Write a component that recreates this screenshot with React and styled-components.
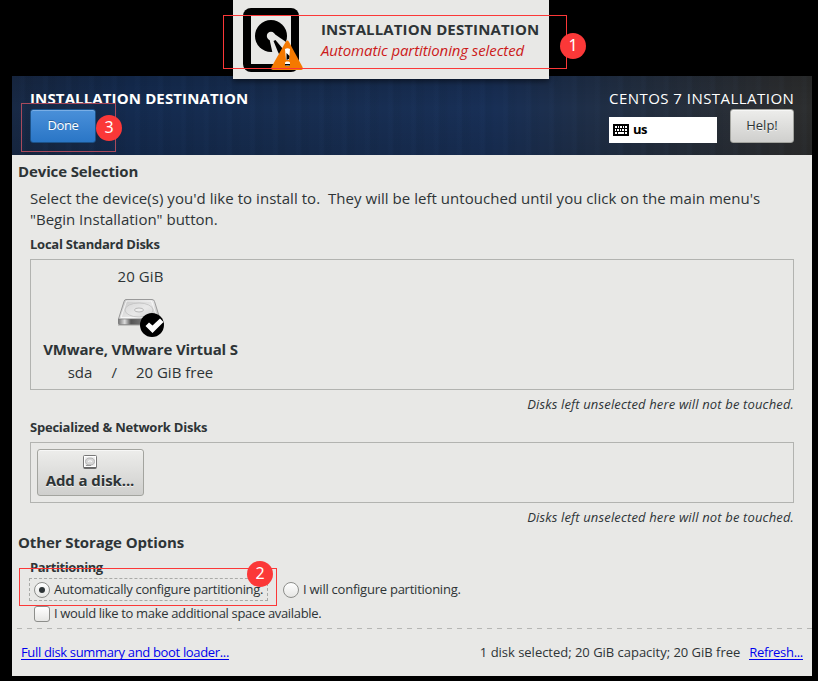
import styled, { createGlobalStyle, css } from "styled-components";

const GlobalStyle = createGlobalStyle`
  * {
    box-sizing: border-box;
  }

  body {
    margin: 0;
    background: #000;
    color: #2e3436;
    font-family: "Open Sans", "Noto Sans", sans-serif;
    font-size: 13px;
  }
`;

const Screen = styled.div`
  position: relative;
  width: 818px;
  height: 681px;
  overflow: hidden;
  background: #000;
`;

const SpokeCard = styled.div`
  position: relative;
  z-index: 1;
  display: flex;
  width: 316px;
  height: 79px;
  margin: 0 0 -3px 233px;
  padding: 8px 0 0 10px;
  background: #e8e8e6;
  box-shadow: 0 2px 6px rgba(0, 0, 0, 0.55);
`;

const SpokeText = styled.div`
  padding: 11px 0 0 17px;
`;

const Line = styled.div`
  height: ${(p) => p.$h || 21}px;
  line-height: ${(p) => p.$h || 21}px;
  font-size: ${(p) => p.$size || 15}px;
  font-weight: ${(p) => (p.$bold ? 700 : 400)};
  font-style: ${(p) => (p.$italic ? "italic" : "normal")};
  letter-spacing: ${(p) => p.$track || 0}px;
  color: ${(p) => p.$color || "inherit"};
  white-space: pre;
`;

const Window = styled.main`
  width: 800px;
  height: 600px;
  margin-left: 12px;
  background: #e8e8e6;
`;

const Header = styled.header`
  display: flex;
  justify-content: space-between;
  height: 79px;
  padding: 12px 18px 0;
  color: #fff;
  background:
    repeating-linear-gradient(
      90deg,
      rgba(255, 255, 255, 0) 0 7px,
      rgba(90, 140, 210, 0.02) 9px 12px,
      rgba(0, 0, 0, 0.03) 14px 19px,
      rgba(255, 255, 255, 0) 23px
    ),
    linear-gradient(rgba(0, 0, 0, 0.12), rgba(0, 0, 0, 0) 40%, rgba(0, 0, 0, 0.1)),
    linear-gradient(90deg, #182945 0%, #142b50 15%, #172d50 34%, #182f56 60%, #222f43 77%, #2c2e31 96%, #2c2d2d 100%);
`;

const HeaderRight = styled.div`
  width: 185px;
`;

const HeaderTools = styled.div`
  display: flex;
  justify-content: space-between;
`;

const Keyboard = styled.div`
  display: flex;
  align-items: center;
  gap: 4px;
  width: 108px;
  height: 26px;
  margin-top: 8px;
  padding: 0 0 1px 4px;
  background: #fff;
  color: #000;
`;

const Button = styled.button`
  width: ${(p) => p.$w}px;
  height: 34px;
  padding: 0 0 2px;
  border: 1px solid #a3a49f;
  border-radius: 3px;
  background: linear-gradient(#ededeb, #dededc 50%, #cfcfcd);
  box-shadow: inset 0 1px #f7f7f6;
  color: #2e3436;
  font-family: inherit;
  font-size: 13px;
  letter-spacing: ${(p) => p.$track || 0}px;
  text-shadow: 0 1px rgba(255, 255, 255, 0.7);

  ${(p) =>
    p.$primary &&
    css`
      border-color: #1c5187;
      background: linear-gradient(#4a90d9, #3a83d0 50%, #2a76c6);
      box-shadow: inset 0 1px #79aee6;
      color: #fff;
      text-shadow: 0 -1px rgba(0, 0, 0, 0.3);
    `}
`;

const Body = styled.div`
  padding: 5px 18px 0;
`;

const SectionTitle = styled(Line)`
  margin-left: -12px;
`;

const DiskBox = styled.section`
  height: ${(p) => p.$boxHeight}px;
  border: 1px solid #b2b3b0;
  padding: ${(p) => p.$pad};
`;

const Disk = styled.div`
  display: flex;
  flex-direction: column;
  align-items: center;
  width: 195px;
`;

const DiskPicture = styled.div`
  height: 51px;
  padding-top: 10px;
`;

const DiskDetails = styled.div`
  display: flex;
  gap: 19px;
  padding-top: 1px;
`;

const Note = styled(Line)`
  text-align: right;
`;

const AddButton = styled(Button)`
  display: flex;
  flex-direction: column;
  align-items: center;
  height: 47px;
  padding: 5px 1px 0 0;
`;

const OptionRow = styled.div`
  display: flex;
  align-items: center;
  height: ${(p) => p.$h || 23}px;
`;

const Option = styled.label`
  display: flex;
  align-items: center;
  gap: 4px;
  height: 23px;
  padding-left: ${(p) => p.$pad || 4}px;
  outline: ${(p) => (p.$focused ? "1px dashed #a9aaa7" : "none")};
  outline-offset: -1px;
  width: ${(p) => p.$w}px;
  margin-left: ${(p) => p.$ml || 0}px;
`;

const Mark = styled.span`
  display: flex;
  flex: none;
  align-items: center;
  justify-content: center;
  width: 16px;
  height: 16px;
  border: 1px solid #8d8e8b;
  border-radius: ${(p) => (p.$round ? "50%" : "3px")};
  background: linear-gradient(#fff, #e6e6e4);

  &::after {
    content: "";
    width: 6px;
    height: 6px;
    border-radius: 50%;
    background: ${(p) => (p.$on ? "#2e3436" : "transparent")};
  }
`;

const Divider = styled.div`
  height: 1px;
  margin-top: 2px;
  background: repeating-linear-gradient(90deg, #b6b7b4 0 5px, transparent 5px 10px);
  background-position-x: 5px;
`;

const Footer = styled.footer`
  display: flex;
  justify-content: space-between;
  padding: 13px 9px 0;
`;

const FooterStatus = styled.div`
  display: flex;
  gap: 9px;
`;

const Link = styled.a`
  height: 17px;
  margin-top: 1px;
  border-bottom: 1px solid #0000ee;
  color: #0000ee;
  font-size: 13px;
  line-height: 18px;
  letter-spacing: ${(p) => p.$track || 0}px;
  white-space: pre;
`;

// Numbered red frames drawn over the installer screen
const Frame = styled.div`
  position: absolute;
  z-index: 2;
  left: ${(p) => p.$x}px;
  top: ${(p) => p.$y}px;
  width: ${(p) => p.$w}px;
  height: ${(p) => p.$h}px;
  border: 1px solid ${(p) => p.$color || "#fb3838"};
`;

const Badge = styled.div`
  position: absolute;
  z-index: 3;
  left: ${(p) => p.$x}px;
  top: ${(p) => p.$y}px;
  width: 26px;
  height: 26px;
  border-radius: 50%;
  background: #fb3838;
  color: #fff;
  font-family: "Noto Sans", sans-serif;
  font-size: 16px;
  line-height: 24px;
  text-align: center;
`;

const DestinationIcon = () => (
  <svg width="61" height="64" viewBox="0 0 61 64">
    <rect width="56" height="64" rx="8" />
    <rect x="8" y="8" width="40" height="48" fill="#e8e8e6" />
    <circle cx="28" cy="28" r="16" />
    <path d="M26 29 L29.5 45 L40 50 L46 36 L30 25Z" fill="#e8e8e6" />
    <path d="M30.5 33 L35 44 L40 54 L46 50 L40 41 L32.5 32Z" />
    <circle cx="28" cy="28" r="4.2" fill="#e8e8e6" />
    <path d="M43 33.5 Q44.5 31.5 46 34 L59.5 59 Q60.5 62 58 62 H30 Q27.5 62 28.5 59 L41.5 36Z" fill="#f57900" />
    <path d="M42 41 Q44.5 39.5 47 41 L46 52 H43Z" fill="#fff" />
    <path d="M43.5 45 L46.5 48 L46 51 L43.5 52Z" />
    <rect x="42" y="53.5" width="5" height="4.5" rx="1.5" fill="#fff" />
    <rect x="42" y="56" width="5" height="1.5" />
  </svg>
);

const KeyboardIcon = () => (
  <svg width="16" height="12" viewBox="0 0 16 12" shapeRendering="crispEdges">
    <rect width="16" height="12" rx="1" />
    <path
      d="M2 2h2v2H2zM5 2h1v2H5zM7 2h2v2H7zM10 2h1v2h-1zM12 2h2v2h-2zM2 5h1v2H2zM4 5h2v2H4zM7 5h1v2H7zM9 5h2v2H9zM12 5h2v2h-2zM2 8h2v2H2zM5 8h6v2H5zM12 8h2v2h-2z"
      fill="#fff"
    />
  </svg>
);

const DriveIcon = () => (
  <svg width="48" height="40" viewBox="0 0 48 40">
    <defs>
      <linearGradient id="lid" x1="0" y1="0" x2="1" y2="1">
        <stop offset="0" stopColor="#c4c4c4" />
        <stop offset="0.5" stopColor="#e6e6e6" />
        <stop offset="1" stopColor="#b4b4b4" />
      </linearGradient>
      <linearGradient id="front">
        <stop offset="0" stopColor="#777" />
        <stop offset="0.15" stopColor="#ddd" />
        <stop offset="0.3" stopColor="#555" />
        <stop offset="1" stopColor="#aaa" />
      </linearGradient>
    </defs>
    <path d="M1 26h42v3H1z" fill="#000" opacity="0.15" />
    <path d="M9 2.5h26q2 0 2.5 2L43 22v4H1.5v-4L7 4.5q.5-2 2-2z" fill="url(#lid)" stroke="#999" />
    <path d="M1.5 22H43v4.5q0 1-1 1H2.5q-1 0-1-1z" fill="url(#front)" stroke="#777" strokeWidth="0.6" />
    <path d="M9.500 4h25L40 20.500H4z" fill="none" stroke="#fff" opacity="0.7" />
    <ellipse cx="22" cy="13" rx="14" ry="7" fill="#eee" fillOpacity="0.3" stroke="#c0c0c0" strokeWidth="0.8" />
    <ellipse cx="22" cy="13" rx="4.500" ry="2" fill="#eee" stroke="#aaa" strokeWidth="0.8" />
    <circle cx="35" cy="28" r="12" />
    <path d="M28.500 29l3.500-3.500 3.500 3L43 21.500l3.500 3.500-11 11z" fill="#fff" />
  </svg>
);

const SmallDriveIcon = () => (
  <svg width="14" height="14" viewBox="0 0 14 14">
    <rect x="0.5" y="0.5" width="13" height="13" rx="1" fill="#eee" stroke="#777" />
    <path d="M1 12.5h12" stroke="#666" strokeWidth="2" />
    <rect x="1.5" y="1.5" width="11" height="10" fill="none" stroke="#fff" />
    <ellipse cx="7" cy="6.5" rx="4.5" ry="3.5" fill="#d6d6d6" stroke="#aaa" strokeWidth="0.8" />
    <path d="M5 6.500q2-1.500 4 0" fill="none" stroke="#fff" />
    <path d="M3 10.500h5" stroke="#999" />
  </svg>
);

export default function App() {
  return (
    <Screen>
      <GlobalStyle />
      <SpokeCard>
        <DestinationIcon />
        <SpokeText>
          <Line $bold $track={0.13}>INSTALLATION DESTINATION</Line>
          <Line $italic $color="#cc1a1a" $track={-0.1}>Automatic partitioning selected</Line>
        </SpokeText>
      </SpokeCard>

      <Window>
        <Header>
          <div>
            <Line $bold $track={0.13}>INSTALLATION DESTINATION</Line>
            <Button $primary $w={66} $track={-0.4}>Done</Button>
          </div>
          <HeaderRight>
            <Line $track={0.46}>CENTOS 7 INSTALLATION</Line>
            <HeaderTools>
              <Keyboard>
                <KeyboardIcon />
                <Line $bold $size={13} $track={-0.5}>us</Line>
              </Keyboard>
              <Button $w={64}>Help!</Button>
            </HeaderTools>
          </HeaderRight>
        </Header>

        <Body>
          <SectionTitle $bold $h={22} $track={-0.12}>Device Selection</SectionTitle>
          <Line $h={6} />
          <Line $track={0.04}>{"Select the device(s) you'd like to install to.  They will be left untouched until you click on the main menu's"}</Line>
          <Line>"Begin Installation" button.</Line>
          <Line $bold $size={13} $h={29} $track={-0.25}>Local Standard Disks</Line>
          <DiskBox $boxHeight={131} $pad="6px 0 0 12px">
            <Disk>
              <Line $track={0.1}>20 GiB</Line>
              <DiskPicture>
                <DriveIcon />
              </DiskPicture>
              <Line $bold $h={23} $track={-0.15}>VMware, VMware Virtual S</Line>
              <DiskDetails>
                <Line>sda</Line>
                <Line>/</Line>
                <Line>20 GiB free</Line>
              </DiskDetails>
            </Disk>
          </DiskBox>
          <Note $italic $size={13} $h={29} $track={0.15}>Disks left unselected here will not be touched.</Note>
          <Line $bold $size={13} $h={16} $track={-0.22}>{"Specialized & Network Disks"}</Line>
          <Line $h={7} />
          <DiskBox $boxHeight={61} $pad="6px">
            <AddButton $w={107}>
              <SmallDriveIcon />
              <Line $bold $h={23} $track={-0.1}>Add a disk...</Line>
            </AddButton>
          </DiskBox>
          <Note $italic $size={13} $h={29} $track={0.15}>Disks left unselected here will not be touched.</Note>
          <SectionTitle $bold $h={21} $track={-0.1}>Other Storage Options</SectionTitle>
          <Line $h={4} />
          <Line $bold $size={13} $h={21} $track={-0.4}>Partitioning</Line>
          <OptionRow>
            <Option $focused $w={239} $ml={-1} $pad={5}>
              <Mark $round $on />
              <Line $size={13} $track={-0.3}>Automatically configure partitioning.</Line>
            </Option>
            <Option $ml={11}>
              <Mark $round />
              <Line $size={13} $track={-0.24}>I will configure partitioning.</Line>
            </Option>
          </OptionRow>
          <OptionRow $h={25}>
            <Option>
              <Mark />
              <Line $size={13} $track={-0.33}>I would like to make additional space available.</Line>
            </Option>
          </OptionRow>
        </Body>
        <Divider />
        <Footer>
          <Link $track={-0.34}>Full disk summary and boot loader...</Link>
          <FooterStatus>
            <Line $size={13} $track={-0.02}>1 disk selected; 20 GiB capacity; 20 GiB free</Line>
            <Link $track={-0.3}>Refresh...</Link>
          </FooterStatus>
        </Footer>
      </Window>

      <Frame $x={223} $y={15} $w={344} $h={54} />
      <Badge $x={560} $y={33}>1</Badge>
      <Frame $x={21} $y={103} $w={95} $h={49} $color="#a84a5c" />
      <Badge $x={96} $y={115}>3</Badge>
      <Frame $x={19} $y={568} $w={258} $h={38} />
      <Badge $x={247} $y={561}>2</Badge>
    </Screen>
  );
}
